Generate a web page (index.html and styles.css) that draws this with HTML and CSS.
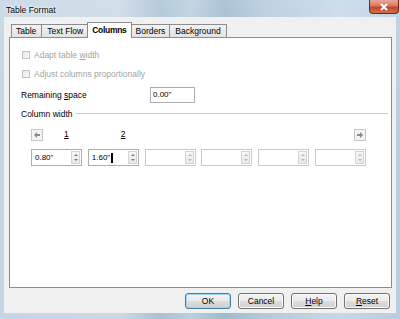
FILE: index.html
```html
<!DOCTYPE html>
<html lang="en">

<head>
    <meta charset="UTF-8">
    <title>Table Format</title>
    <link rel="stylesheet" href="styles.css">
</head>

<body>
    <div class="window">
        <div class="titlebar">
            <span class="title">Table Format</span>
            <div class="close-btn">
                <svg width="10" height="8" viewBox="0 0 10 8">
                    <path d="M2 1 L8 7 M8 1 L2 7" stroke="#fff" stroke-width="2" />
                </svg>
            </div>
        </div>

        <div class="client">
            <div class="tabs">
                <div class="tab">Table</div>
                <div class="tab">Text Flow</div>
                <div class="tab active">Columns</div>
                <div class="tab">Borders</div>
                <div class="tab">Background</div>
            </div>

            <div class="panel">
                <label class="check-row disabled">
                    <span class="checkbox"></span>
                    <span>Adapt table <u>w</u>idth</span>
                </label>
                <label class="check-row disabled second">
                    <span class="checkbox"></span>
                    <span>Adjust columns proportionally</span>
                </label>

                <div class="field-row">
                    <span class="field-label">Remaining <u>s</u>pace</span>
                    <div class="textbox">0.00"</div>
                </div>

                <div class="group-title">
                    <span>Column width</span>
                    <div class="group-line"></div>
                </div>

                <div class="columns">
                    <div class="col-head">
                        <div class="arrow-btn">
                            <svg width="8" height="8" viewBox="0 0 8 8">
                                <path d="M1 4 L4 1 L4 3 L7 3 L7 5 L4 5 L4 7 Z" fill="#8a8a8a" />
                            </svg>
                        </div>
                        <span class="col-num"><u>1</u></span>
                    </div>
                    <div class="col-head"><span class="col-num"><u>2</u></span></div>
                    <div class="col-head"></div>
                    <div class="col-head"></div>
                    <div class="col-head"></div>
                    <div class="col-head end">
                        <div class="arrow-btn">
                            <svg width="8" height="8" viewBox="0 0 8 8">
                                <path d="M7 4 L4 1 L4 3 L1 3 L1 5 L4 5 L4 7 Z" fill="#8a8a8a" />
                            </svg>
                        </div>
                    </div>

                    <div class="spin">
                        <span class="spin-text">0.80"</span>
                        <div class="spin-btns"><i class="up"></i><i class="down"></i></div>
                    </div>
                    <div class="spin">
                        <span class="spin-text">1.60"<b class="caret"></b></span>
                        <div class="spin-btns"><i class="up"></i><i class="down"></i></div>
                    </div>
                    <div class="spin off">
                        <span class="spin-text"></span>
                        <div class="spin-btns"><i class="up"></i><i class="down"></i></div>
                    </div>
                    <div class="spin off">
                        <span class="spin-text"></span>
                        <div class="spin-btns"><i class="up"></i><i class="down"></i></div>
                    </div>
                    <div class="spin off">
                        <span class="spin-text"></span>
                        <div class="spin-btns"><i class="up"></i><i class="down"></i></div>
                    </div>
                    <div class="spin off">
                        <span class="spin-text"></span>
                        <div class="spin-btns"><i class="up"></i><i class="down"></i></div>
                    </div>
                </div>
            </div>

            <div class="buttons">
                <div class="btn default">OK</div>
                <div class="btn">Cancel</div>
                <div class="btn"><u>H</u>elp</div>
                <div class="btn"><u>R</u>eset</div>
            </div>
        </div>
    </div>
</body>

</html>
```

FILE: styles.css
```css
* {
    margin: 0;
    padding: 0;
    box-sizing: border-box;
}

body {
    width: 400px;
    height: 319px;
    overflow: hidden;
    font-family: 'Liberation Sans', Arial, sans-serif;
    font-size: 8.5px;
    color: #000;
}

u {
    text-decoration: underline;
}

/* aero glass frame */
.window {
    width: 400px;
    height: 319px;
    padding: 0 4px 6px 4px;
    display: flex;
    flex-direction: column;
    background:
        linear-gradient(rgba(255, 255, 255, 0.15), rgba(255, 255, 255, 0) 40%),
        linear-gradient(90deg, #c4d5e4 0%, #cad9e6 30%, #a9c2d4 40%, #b9cfdc 48%, #9dbbcf 56%, #b3cadb 66%, #c6d8e7 85%, #b7cde0 100%);
}

.titlebar {
    height: 17px;
    display: flex;
    align-items: flex-start;
    justify-content: space-between;
}

.title {
    margin-top: 5px;
    margin-left: 2px;
    font-size: 8.5px;
    text-shadow: 0 0 4px #fff, 0 0 2px #fff;
}

.close-btn {
    width: 30px;
    height: 14px;
    margin-right: -3px;
    border: 1px solid #6e2a1c;
    border-top: none;
    border-radius: 0 0 4px 4px;
    background: linear-gradient(#e8a697 0%, #d97a63 45%, #c4432a 55%, #d0704f 100%);
    display: flex;
    align-items: center;
    justify-content: center;
}

.client {
    flex: 1;
    background: #f0f0f0;
    padding: 5px 4px 4px 5px;
    display: flex;
    flex-direction: column;
}

/* tab strip */
.tabs {
    height: 15px;
    display: flex;
    align-items: flex-end;
    padding-left: 2px;
    position: relative;
    z-index: 1;
}

.tab {
    height: 13px;
    padding: 0 4px;
    border: 1px solid #898c95;
    border-bottom: none;
    margin-right: -1px;
    background: linear-gradient(#f2f2f2, #e3e3e3);
    line-height: 12px;
    white-space: nowrap;
}

.tab:first-child {
    padding: 0 5px 0 4px;
}

.tab:nth-child(2) {
    padding: 0 5px;
}

.tab.active {
    height: 16px;
    margin-bottom: -1px;
    margin-left: -1px;
    margin-right: -1px;
    padding: 0 4px;
    background: #fff;
    line-height: 15px;
    font-weight: bold;
    letter-spacing: -0.3px;
}

.tab:last-child {
    padding: 0 5px;
}

.panel {
    height: 251px;
    border: 1px solid #898c95;
    background: #fff;
    padding: 11px 2px 0 11px;
    display: flex;
    flex-direction: column;
}

.check-row {
    height: 11px;
    display: flex;
    align-items: center;
    gap: 4px;
    margin-left: 1px;
}

.check-row.second {
    margin-top: 8px;
}

.disabled {
    color: #a3a3a3;
}

.checkbox {
    width: 8px;
    height: 8px;
    border: 1px solid #c2c2c2;
    background: linear-gradient(135deg, #e8e8e8, #fafafa);
}

.field-row {
    margin-top: 8px;
    height: 16px;
    display: flex;
    align-items: center;
}

.field-label {
    width: 129px;
}

.textbox {
    width: 45px;
    height: 16px;
    border: 1px solid #abadb3;
    padding-left: 2px;
    line-height: 14px;
    font-size: 8px;
}

.group-title {
    margin-top: 5px;
    height: 11px;
    display: flex;
    align-items: center;
    gap: 3px;
}

.group-line {
    flex: 1;
    height: 1px;
    background: #c8c8c8;
    margin-right: 1px;
}

/* column width table */
.columns {
    margin-top: 10px;
    margin-left: 10px;
    width: 335px;
    display: grid;
    grid-template-columns: repeat(6, 51px);
    column-gap: 5.8px;
    row-gap: 8px;
}

.col-head {
    height: 12px;
    position: relative;
}

.col-head.end {
    display: flex;
    justify-content: flex-end;
}

.arrow-btn {
    width: 12px;
    height: 12px;
    border: 1px solid #c6c6c6;
    background: #f3f3f3;
    display: flex;
    align-items: center;
    justify-content: center;
}

.col-num {
    position: absolute;
    left: 33px;
    top: 0;
    line-height: 11px;
}

.spin {
    height: 17px;
    border: 1px solid #abadb3;
    background: #fff;
    display: flex;
    align-items: stretch;
    padding: 1px;
}

.spin.off {
    border-color: #c4cbd4;
}

.spin-text {
    flex: 1;
    padding-left: 2px;
    line-height: 13px;
    font-size: 8px;
    display: flex;
    align-items: center;
}

.caret {
    width: 2px;
    height: 10px;
    background: #000;
    margin-left: 1px;
}

.spin-btns {
    width: 9px;
    display: flex;
    flex-direction: column;
    border: 1px solid #d4d4d4;
    background: linear-gradient(#f7f7f7, #e9e9e9);
}

.spin-btns i {
    flex: 1;
    position: relative;
}

.spin-btns i::after {
    content: "";
    position: absolute;
    left: 2px;
    top: 2px;
    border-left: 2px solid transparent;
    border-right: 2px solid transparent;
}

.spin-btns .up::after {
    border-bottom: 2px solid #7a7a7a;
}

.spin-btns .down::after {
    top: 1px;
    border-top: 2px solid #7a7a7a;
}

.spin.off .spin-btns .up::after {
    border-bottom-color: #b8b8b8;
}

.spin.off .spin-btns .down::after {
    border-top-color: #b8b8b8;
}

/* dialog buttons */
.buttons {
    margin-top: 5px;
    display: flex;
    justify-content: flex-end;
    gap: 7px;
    padding-right: 2px;
}

.btn {
    width: 46px;
    height: 16px;
    border: 1px solid #707070;
    border-radius: 3px;
    background: linear-gradient(#f2f2f2 0%, #ebebeb 50%, #dddddd 51%, #cfcfcf 100%);
    box-shadow: inset 0 0 0 1px #fcfcfc;
    text-align: center;
    line-height: 14px;
}

.btn.default {
    border-color: #3c7fb1;
    box-shadow: inset 0 0 0 1px #9ed6f4;
}
```
